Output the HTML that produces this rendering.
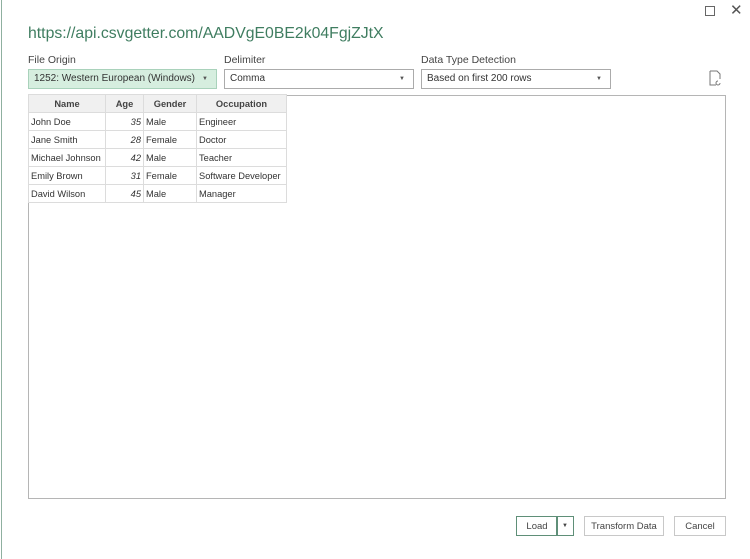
<!DOCTYPE html>
<html><head><style>
body{margin:0;width:750px;height:559px;background:#fff;position:relative;overflow:hidden;font-family:"Liberation Sans",sans-serif;color:#333}
.a{position:absolute}
.lbl{font-size:10.5px;color:#444}
.dd{position:absolute;top:69px;height:18px;border:1px solid #ababab;font-size:10px;line-height:18px;padding-left:5px;box-sizing:content-box;white-space:nowrap;overflow:hidden}
.dd .ar{position:absolute;right:8px;top:0;font-size:6px;color:#555}
table{border-collapse:collapse;font-size:9.3px;position:absolute;left:28px;top:94px;table-layout:fixed;width:258px}
td,th{border:1px solid #dcdcdc;height:17px;padding:0 2px;white-space:nowrap;overflow:hidden}
th{background:#f0f0f0;font-weight:bold;color:#444}
td.n{text-align:right;font-style:italic}
.btn{position:absolute;top:516px;height:18px;border:1px solid #c8c8c8;font-size:9.5px;line-height:19px;text-align:center;color:#444}
</style></head><body>
<div class="a" style="left:1px;top:0;width:1px;height:559px;background:#8fb0a0"></div>
<div class="a" style="left:705px;top:6px;width:8px;height:8px;border:1px solid #666"></div>
<div class="a" style="left:730px;top:1px;font-size:15px;color:#555">✕</div>
<div class="a" style="left:28px;top:25px;font-size:15.8px;color:#3f7d60">https://api.csvgetter.com/AADVgE0BE2k04FgjZJtX</div>
<div class="a lbl" style="left:28px;top:54px">File Origin</div>
<div class="a lbl" style="left:224px;top:54px">Delimiter</div>
<div class="a lbl" style="left:421px;top:54px">Data Type Detection</div>
<div class="dd" style="left:28px;width:182px;background:#d6eedf;border-color:#a9d2bb">1252: Western European (Windows)<span class="ar" style="background:#d6eedf;padding-left:3px">▼</span></div>
<div class="dd" style="left:224px;width:183px">Comma<span class="ar">▼</span></div>
<div class="dd" style="left:421px;width:183px">Based on first 200 rows<span class="ar">▼</span></div>
<svg class="a" style="left:709px;top:70px" width="14" height="16" viewBox="0 0 14 16"><path d="M1 1H8L11 4V9M1 1V15H7" fill="none" stroke="#777"/><path d="M9 11a2 2 0 1 0 2 2" fill="none" stroke="#777"/></svg>
<div class="a" style="left:28px;top:95px;width:696px;height:402px;border:1px solid #b5b5b5"></div>
<table>
<colgroup><col style="width:77px"><col style="width:38px"><col style="width:53px"><col style="width:90px"></colgroup>
<tr><th>Name</th><th>Age</th><th>Gender</th><th>Occupation</th></tr>
<tr><td>John Doe</td><td class="n">35</td><td>Male</td><td>Engineer</td></tr>
<tr><td>Jane Smith</td><td class="n">28</td><td>Female</td><td>Doctor</td></tr>
<tr><td>Michael Johnson</td><td class="n">42</td><td>Male</td><td>Teacher</td></tr>
<tr><td>Emily Brown</td><td class="n">31</td><td>Female</td><td>Software Developer</td></tr>
<tr><td>David Wilson</td><td class="n">45</td><td>Male</td><td>Manager</td></tr>
</table>
<div class="btn" style="left:516px;width:40px;border-color:#5f8f78">Load</div>
<div class="btn" style="left:556px;width:16px;border-color:#5f8f78;font-size:6px">▼</div>
<div class="btn" style="left:584px;width:78px">Transform Data</div>
<div class="btn" style="left:674px;width:50px">Cancel</div>
</body></html>
